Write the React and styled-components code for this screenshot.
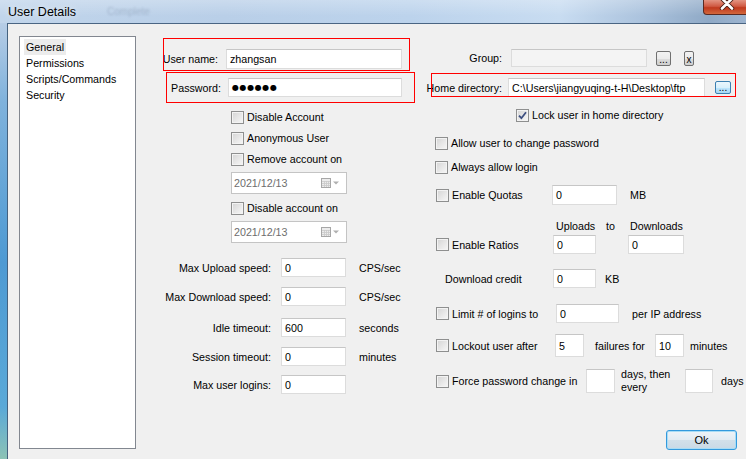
import React from 'react';
import styled, { createGlobalStyle } from 'styled-components';

const GlobalStyle = createGlobalStyle`
  html, body {
    margin: 0;
    padding: 0;
    background: #f0f0f0;
  }
  body {
    font-family: "Liberation Sans", Arial, sans-serif;
    font-size: 10.7px;
    color: #000;
  }
  * {
    box-sizing: border-box;
  }
`;

const Window = styled.div`
    position: relative;
    display: flex;
    flex-direction: column;
    width: 746px;
    height: 459px;
    overflow: hidden;
`;

const TitleBar = styled.div`
    display: flex;
    align-items: center;
    flex-shrink: 0;
    height: 23px;
    background:
        linear-gradient(180deg, rgba(255, 255, 255, 0.25), rgba(255, 255, 255, 0) 70%),
        linear-gradient(90deg, #c1d5eb 0%, #b9cfe8 30%, #bcd3ec 55%, #c8dcf1 75%, #a9c1dc 87%, #8fa9c6 95%, #9db4cf 100%);
`;

const Title = styled.span`
    padding-left: 8px;
    font-size: 12.5px;
    color: #000;
    text-shadow: 0 0 6px rgba(255, 255, 255, 0.9);
`;

const GhostText = styled.span`
    margin-left: 31px;
    font-size: 10px;
    color: rgba(50, 70, 100, 0.22);
    filter: blur(1.2px);
`;

const CloseButton = styled.div`
    display: flex;
    justify-content: center;
    align-self: flex-start;
    width: 47px;
    height: 15px;
    margin-left: auto;
    margin-right: -4px;
    border: 1px solid #5a2a22;
    border-top: none;
    border-radius: 0 0 0 4px;
    background: linear-gradient(180deg, #e39482 0%, #d05a43 45%, #c0391e 55%, #d2673c 100%);
    overflow: hidden;

    svg {
        margin-top: -3px;
    }
`;

const Frame = styled.div`
    display: flex;
    flex: 1;
    min-height: 0;
`;

const FrameEdge = styled.div`
    width: 8px;
    flex-shrink: 0;
    border-right: 1px solid #45627f;
    background: linear-gradient(180deg, #b7cde6 0%, #7fb2dc 18%, #4e9ad3 55%, #5aa9d8 88%, #8cc3b5 100%);
`;

const Body = styled.div`
    display: flex;
    flex: 1;
    padding: 12px 0 0 11px;
    background: #f0f0f0;
    border-top: 1px solid #4a6583;
`;

const Sidebar = styled.div`
    width: 117px;
    height: 413px;
    flex-shrink: 0;
    padding: 2px 4px;
    background: #fff;
    border: 1px solid #828790;
`;

const SideItem = styled.div`
    width: fit-content;
    height: 16px;
    line-height: 16px;
    padding: 0 2px;
    background: ${p => (p.$selected ? '#ececec' : 'transparent')};
`;

const Main = styled.div`
    display: flex;
    flex: 1;
`;

const LeftCol = styled.div`
    display: flex;
    flex-direction: column;
    width: 284px;
    flex-shrink: 0;
`;

const RightCol = styled.div`
    display: flex;
    flex-direction: column;
    flex: 1;
`;

const Row = styled.div`
    display: flex;
    align-items: center;
    flex-shrink: 0;
    height: ${p => p.$h}px;
    margin-top: ${p => p.$mt || 0}px;
    padding-left: ${p => p.$pl || 0}px;
`;

const Label = styled.span`
    flex-shrink: 0;
    width: ${p => p.$w}px;
    text-align: right;
    white-space: nowrap;
`;

const Text = styled.span`
    flex-shrink: 0;
    width: ${p => (p.$w ? `${p.$w}px` : 'auto')};
    margin-left: ${p => p.$ml || 0}px;
    white-space: nowrap;
`;

const TwoLine = styled.span`
    flex-shrink: 0;
    width: ${p => p.$w}px;
    margin-left: ${p => p.$ml || 0}px;
    line-height: 13px;
`;

const Field = styled.div`
    display: flex;
    align-items: center;
    flex-shrink: 0;
    width: ${p => p.$w}px;
    height: ${p => (p.$h ? `${p.$h}px` : '100%')};
    margin-left: ${p => p.$ml || 0}px;
    padding: 0 3px;
    background: ${p => (p.$disabled ? '#f4f4f4' : '#fff')};
    border: 1px solid #dcdcdc;
    border-top-color: #c6c6c6;
    white-space: nowrap;
    overflow: hidden;
`;

const Dots = styled.span`
    font-family: "DejaVu Sans", sans-serif;
    font-size: 8px;
    letter-spacing: 0.6px;
`;

const DateBox = styled.div`
    display: flex;
    align-items: center;
    justify-content: space-between;
    width: 116px;
    height: 22px;
    margin-left: 95px;
    padding: 0 6px 0 2px;
    background: #fff;
    border: 1px solid #c4c4c4;
    color: #6d6d6d;
`;

const CheckItem = styled.label`
    display: flex;
    align-items: center;
    flex-shrink: 0;
    width: ${p => (p.$w ? `${p.$w}px` : 'auto')};
    white-space: nowrap;
`;

const Box = styled.span`
    display: flex;
    align-items: center;
    justify-content: center;
    width: 13px;
    height: 13px;
    margin-right: 3px;
    flex-shrink: 0;
    border: 1px solid #8e8f8f;
    background: linear-gradient(135deg, #d4d4d4 0%, #e8e8e8 55%, #f7f7f7 100%);
    box-shadow: inset 0 0 0 1px #f3f3f3;
`;

const SmallButton = styled.div`
    display: flex;
    align-items: flex-end;
    justify-content: center;
    flex-shrink: 0;
    width: ${p => p.$w}px;
    height: ${p => p.$h}px;
    margin-left: ${p => p.$ml || 0}px;
    border: 1px solid ${p => (p.$hot ? '#3c7fb1' : '#707070')};
    border-radius: 2px;
    background: ${p => (p.$hot
        ? 'linear-gradient(180deg, #eaf6fd 0%, #d9f0fc 50%, #bee6fd 51%, #a7d9f5 100%)'
        : 'linear-gradient(180deg, #f2f2f2 0%, #ebebeb 50%, #dddddd 51%, #cfcfcf 100%)')};
    font-size: 10px;
    line-height: 11px;
`;

const OkButton = styled.div`
    display: flex;
    align-items: center;
    justify-content: center;
    width: 71px;
    height: 20px;
    margin-left: 246px;
    border: 1px solid #3399dd;
    border-radius: 3px;
    background: linear-gradient(180deg, #eef3f8 0%, #e2ebf2 50%, #d2e0ea 51%, #c9d9e6 100%);
    box-shadow: inset 0 0 0 1px #a8dcf5;
    font-size: 11px;
`;

const RedBox = styled.div`
    position: absolute;
    left: ${p => p.$x}px;
    top: ${p => p.$y}px;
    width: ${p => p.$w}px;
    height: ${p => p.$h}px;
    border: 1px solid #ff0000;
    pointer-events: none;
`;

const Check = ({ checked, w, children }) => (
    <CheckItem $w={w}>
        <Box>
            {checked && (
                <svg width="9" height="9" viewBox="0 0 9 9">
                    <path d="M1 4.6 L3.4 7.2 L8 1.2" fill="none" stroke="#3d4f80" strokeWidth="1.8" />
                </svg>
            )}
        </Box>
        {children}
    </CheckItem>
);

const CalendarIcon = () => (
    <svg width="19" height="10" viewBox="0 0 19 10">
        <rect x="0.5" y="0.5" width="9" height="9" fill="#ececec" stroke="#a7a7a7" />
        <path d="M1 3.5 H9 M1 5.5 H9 M1 7.5 H9 M3.5 3 V9 M5.5 3 V9 M7.5 3 V9" stroke="#c9c9c9" strokeWidth="0.8" />
        <path d="M12 3.5 L18 3.5 L15 6.5 Z" fill="#b0b0b0" />
    </svg>
);

const DateField = ({ value }) => (
    <DateBox>
        <span>{value}</span>
        <CalendarIcon />
    </DateBox>
);

const SpeedRow = ({ mt, label, value, unit }) => (
    <Row $h={19} $mt={mt}>
        <Label $w={135}>{label}</Label>
        <Field $w={65} $ml={10}>{value}</Field>
        {unit && <Text $ml={13}>{unit}</Text>}
    </Row>
);

const pages = ['General', 'Permissions', 'Scripts/Commands', 'Security'];

const App = () => (
    <React.Fragment>
        <GlobalStyle />
        <Window>
            <TitleBar>
                <Title>User Details</Title>
                <GhostText>Complete</GhostText>
                <CloseButton>
                    <svg width="16" height="13" viewBox="0 0 16 13">
                        <path d="M3 1.5 L13 11.5 M13 1.5 L3 11.5" stroke="#4a1f16" strokeWidth="4.4" strokeLinecap="round" />
                        <path d="M3 1.5 L13 11.5 M13 1.5 L3 11.5" stroke="#ffffff" strokeWidth="2.6" strokeLinecap="round" />
                    </svg>
                </CloseButton>
            </TitleBar>
            <Frame>
                <FrameEdge />
                <Body>
                    <Sidebar>
                        {pages.map((page, i) => (
                            <SideItem key={page} $selected={i === 0}>{page}</SideItem>
                        ))}
                    </Sidebar>
                    <Main>
                        <LeftCol>
                            <Row $h={20} $mt={13}>
                                <Label $w={82}>User name:</Label>
                                <Field $w={176} $ml={8}>zhangsan</Field>
                            </Row>
                            <Row $h={19} $mt={9}>
                                <Label $w={85}>Password:</Label>
                                <Field $w={174} $ml={7}><Dots>●●●●●●</Dots></Field>
                            </Row>
                            <Row $h={20} $mt={10} $pl={95}>
                                <Check>Disable Account</Check>
                            </Row>
                            <Row $h={20} $mt={1} $pl={95}>
                                <Check>Anonymous User</Check>
                            </Row>
                            <Row $h={20} $mt={1} $pl={95}>
                                <Check>Remove account on</Check>
                            </Row>
                            <Row $h={22} $mt={3}>
                                <DateField value="2021/12/13" />
                            </Row>
                            <Row $h={20} $mt={4} $pl={95}>
                                <Check>Disable account on</Check>
                            </Row>
                            <Row $h={22} $mt={3}>
                                <DateField value="2021/12/13" />
                            </Row>
                            <SpeedRow mt={15} label="Max Upload speed:" value="0" unit="CPS/sec" />
                            <SpeedRow mt={10} label="Max Download speed:" value="0" unit="CPS/sec" />
                            <SpeedRow mt={12} label="Idle timeout:" value="600" unit="seconds" />
                            <SpeedRow mt={10} label="Session timeout:" value="0" unit="minutes" />
                            <SpeedRow mt={9} label="Max user logins:" value="0" />
                        </LeftCol>
                        <RightCol>
                            <Row $h={18} $mt={13}>
                                <Label $w={82}>Group:</Label>
                                <Field $w={136} $ml={9} $disabled />
                                <SmallButton $w={15} $h={15} $ml={9}>...</SmallButton>
                                <SmallButton $w={10} $h={15} $ml={13}>x</SmallButton>
                            </Row>
                            <Row $h={19} $mt={11}>
                                <Label $w={82}>Home directory:</Label>
                                <Field $w={197} $ml={6}>C:\Users\jiangyuqing-t-H\Desktop\ftp</Field>
                                <SmallButton $w={16} $h={13} $ml={10} $hot>...</SmallButton>
                            </Row>
                            <Row $h={20} $mt={8} $pl={96}>
                                <Check checked>Lock user in home directory</Check>
                            </Row>
                            <Row $h={20} $mt={8} $pl={15}>
                                <Check>Allow user to change password</Check>
                            </Row>
                            <Row $h={20} $mt={4} $pl={15}>
                                <Check>Always allow login</Check>
                            </Row>
                            <Row $h={20} $mt={8} $pl={16}>
                                <Check w={116}>Enable Quotas</Check>
                                <Field $w={65}>0</Field>
                                <Text $ml={13}>MB</Text>
                            </Row>
                            <Row $h={16} $mt={13} $pl={136}>
                                <Text $w={50}>Uploads</Text>
                                <Text $w={24}>to</Text>
                                <Text>Downloads</Text>
                            </Row>
                            <Row $h={19} $mt={1} $pl={16}>
                                <Check w={117}>Enable Ratios</Check>
                                <Field $w={43}>0</Field>
                                <Field $w={56} $ml={32}>0</Field>
                            </Row>
                            <Row $h={19} $mt={15} $pl={25}>
                                <Text $w={108}>Download credit</Text>
                                <Field $w={43}>0</Field>
                                <Text $ml={9}>KB</Text>
                            </Row>
                            <Row $h={19} $mt={16} $pl={16}>
                                <Check w={120}>Limit # of logins to</Check>
                                <Field $w={63}>0</Field>
                                <Text $ml={13}>per IP address</Text>
                            </Row>
                            <Row $h={23} $mt={11} $pl={16}>
                                <Check w={119}>Lockout user after</Check>
                                <Field $w={29}>5</Field>
                                <Text $w={60} $ml={11}>failures for</Text>
                                <Field $w={29}>10</Field>
                                <Text $ml={6}>minutes</Text>
                            </Row>
                            <Row $h={24} $mt={12} $pl={16}>
                                <Check w={150}>Force password change in</Check>
                                <Field $w={29} />
                                <TwoLine $w={64} $ml={6}>days, then<br />every</TwoLine>
                                <Field $w={28} />
                                <Text $ml={8}>days</Text>
                            </Row>
                            <Row $h={20} $mt={37}>
                                <OkButton>Ok</OkButton>
                            </Row>
                        </RightCol>
                    </Main>
                </Body>
            </Frame>
            <RedBox $x={163} $y={38} $w={247} $h={33} />
            <RedBox $x={166} $y={72} $w={249} $h={31} />
            <RedBox $x={431} $y={73} $w={305} $h={24} />
        </Window>
    </React.Fragment>
);

export default App;
